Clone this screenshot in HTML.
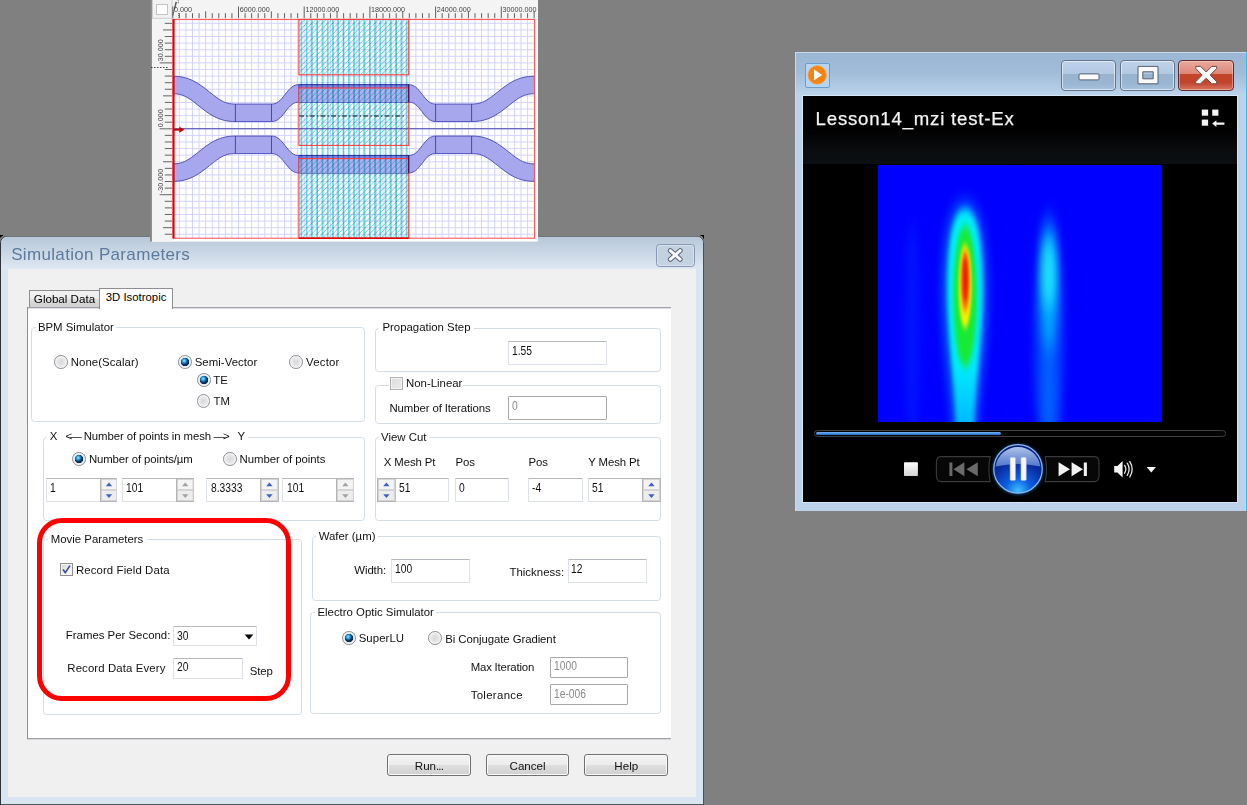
<!DOCTYPE html>
<html><head><meta charset="utf-8"><title>Simulation Parameters</title>
<style>
html,body{margin:0;padding:0}
body{width:1247px;height:805px;overflow:hidden;background:#808080;font-family:"Liberation Sans",sans-serif;position:relative}
svg text{font-family:"Liberation Sans",sans-serif}

.dlg{position:absolute;left:0;top:235.6px;width:703.6px;height:569.4px;background:#dae5f3;border-radius:7px 7px 0 0;box-shadow:inset 1px 0 0 #30343a, inset -1px 0 0 #4a4e55, inset 0 1px 0 #6e7680, inset 0 -1px 0 #50545a}
.dlgtitle{position:absolute;left:1px;top:236.6px;width:701.6px;height:32.2px;border-radius:6px 6px 0 0;background:linear-gradient(#b9c8d8 0,#c3d1e0 30%,#d3deeb 70%,#dfe8f4 100%)}
.dcorner{position:absolute;left:0;top:235.4px;width:3px;height:4px;background:radial-gradient(circle at 100% 100%,rgba(0,0,0,0) 2.6px,#000 3.2px)}
.dlgclient{position:absolute;left:8px;top:268.8px;width:687.8px;height:528.4px;background:#f0f0f0}
.ttl{position:absolute;font-size:17px;letter-spacing:0.33px;line-height:16px;color:#5c7a9c;white-space:pre}
.dclose{position:absolute;left:656.3px;top:244.1px;width:38.4px;height:22.7px;border:1.4px solid #8797b4;border-radius:3.5px;box-sizing:border-box;background:linear-gradient(#c4d1e0,#c3d0e0 50%,#c6d3e3);box-shadow:inset 0 0 0 1px rgba(225,234,244,0.7);overflow:hidden}
.dclose svg{position:absolute;left:-1.2px;top:-1.2px}
.dcorner2{position:absolute;left:699.6px;top:235.3px;width:4px;height:4.2px;background:radial-gradient(circle at 0 100%,rgba(0,0,0,0) 3.2px,#000 3.8px)}
.pane{position:absolute;background:#fff;border:1px solid #8c8e94;border-top:1px solid #a0a2a8;border-right:none;border-bottom:1px solid #a0a2a8;box-sizing:border-box;box-shadow:0 1px 0 #d6d7da,inset 0 1px 0 rgba(160,162,168,0.35)}
.tab{position:absolute;box-sizing:border-box;border:1px solid #8c8e94;border-bottom:none;background:linear-gradient(#f2f2f2,#ebebeb 50%,#dddddd 52%,#cfcfcf);font-size:11.6px;text-align:center;white-space:pre}
.tab span{position:relative;top:1.6px}
.tab.sel{background:#fff;z-index:2}
.tab.sel span{top:1.3px;font-size:11.35px}
.grp{position:absolute;box-sizing:border-box;border:1px solid #d3dde6;border-radius:3.5px}
.gl{position:absolute;height:16px;line-height:16px;background:#fff;font-size:11.4px;text-align:center;white-space:pre;color:#111}
.t{position:absolute;height:16px;line-height:16px;font-size:11.4px;white-space:pre;color:#111}
.t.g{color:#8a8a8a}
.ft{font-size:13px;transform:scaleX(0.79);transform-origin:0 50%}
.rad{position:absolute;width:13.8px;height:13.8px;border-radius:50%;box-sizing:border-box;border:1px solid #8c9099;background:radial-gradient(circle at 50% 50%,#d8d8d8 0,#e6e6e6 45%,#f6f6f6 75%,#fdfdfd 100%);box-shadow:inset 0 0 0 1px #f4f4f4}
.rad.on{background:radial-gradient(circle at 50% 50%,rgba(0,0,0,0) 0,rgba(0,0,0,0) 3.9px,#dfe8ef 4.5px,#f6f8fa 5.8px),radial-gradient(circle at 43% 40%,#a8e8ff 0,#38aee2 1.5px,#1668a6 2.8px,#0a2a52 4.1px,#0a2a52 5px)}
.chk{position:absolute;width:13px;height:13px;box-sizing:border-box;border:1px solid #8e8f8f;background:linear-gradient(135deg,#d0d0d0,#f4f4f4 60%,#fafafa);box-shadow:inset 0 0 0 1px #f4f4f4}
.chk.dis{border-color:#b1b1b1;background:linear-gradient(135deg,#dcdcdc,#ececec)}
.chk svg{position:absolute;left:-1px;top:-1px}
.fld{position:absolute;box-sizing:border-box;background:#fff;border:1px solid #dde1e8;border-top-color:#b4b8c0;border-radius:1px}
.fld.dis{border-color:#a9a9a9;background:#fff}
.abs{position:absolute}
.btn{position:absolute;box-sizing:border-box;border:1px solid #707070;border-radius:3px;background:linear-gradient(#f3f3f3,#ececec 48%,#dedede 52%,#d0d0d0);box-shadow:inset 0 0 0 1px #fafafa;font-size:11.6px;text-align:center;color:#111}
.btn i{font-style:normal;letter-spacing:-0.9px}
.btn span{position:relative;top:3.4px}
.redbox{position:absolute;left:36.7px;top:518.2px;width:254.4px;height:182.6px;box-sizing:border-box;border:5.6px solid #ff0000;border-radius:25px}

.wm{position:absolute;left:794.8px;top:51.6px;width:460px;height:459.4px;background:#bbd2ea;box-shadow:inset 1px 1px 0 #c7dbef}
.wmtb{position:absolute;left:795.8px;top:52.6px;width:455px;height:43.4px;background:linear-gradient(#9bb7d4 0,#a1bcd8 45%,#b0c9e3 75%,#bcd4ec 100%)}
.wmedge{position:absolute;left:1245.6px;top:52px;width:1.4px;height:458.6px;background:#35c2ea}
.wmicon{position:absolute;left:805.2px;top:63.4px;width:24.6px;height:24.8px;box-sizing:border-box;border:1px solid #6a9dd0;border-radius:2px;background:#b4d6f2;overflow:hidden}
.wmicon svg{position:absolute;left:-1px;top:-1px}
.cb{position:absolute;top:59.8px;height:31.6px;box-sizing:border-box;border:1px solid #62738c;border-radius:4px;background:linear-gradient(#bfd3e9 0,#b2c9e2 44%,#98b3d0 46%,#9ab6d3 80%,#a9c3de 100%);box-shadow:inset 0 0 0 1px rgba(255,255,255,0.55);overflow:hidden}
.cb.red{border-color:#5c2a33;background:linear-gradient(#e9aa9d 0,#dc8877 44%,#c2442a 46%,#c1452c 75%,#d87560 100%);box-shadow:inset 0 0 0 1px rgba(255,220,210,0.45)}
.wmc{position:absolute;left:802.6px;top:96px;width:434.4px;height:406px;background:#000;box-shadow:0 0 0 1px rgba(222,235,248,0.8)}
.wmhdr{position:absolute;left:802.6px;top:128px;width:434.4px;height:36px;background:linear-gradient(#000,#0a0c0e 60%,#0c0f12)}
.wmt{position:absolute;left:815.6px;top:108.4px;font-size:18.6px;letter-spacing:0.8px;line-height:22px;color:#f4f4f4;white-space:pre;-webkit-text-stroke:0.25px #f0f0f0}
.seek{position:absolute;left:814.4px;top:430.4px;width:412px;height:6.6px;box-sizing:border-box;border:1px solid #3c3f42;border-radius:3.3px;background:#050505}
.seekp{position:absolute;left:0.6px;top:0.7px;width:184.6px;height:3.2px;border-radius:1.6px;background:linear-gradient(#7fb6f0,#3a86dc 60%,#2a6cc0)}

</style></head><body>
<div class="wm"></div><div class="wmtb"></div><div class="wmedge"></div>
<div class="wmicon"><svg width="25" height="25" viewBox="0 0 25 25"><circle cx="12.2" cy="11.9" r="9.2" fill="#f58410"/><circle cx="12.2" cy="11.9" r="9.2" fill="none" stroke="#f9a040" stroke-width="0.8"/><path d="M9 6.6L17.2 11.9L9 17.2Z" fill="#fff"/></svg></div>
<div class="cb" style="left:1060.6px;width:55.6px"><div class="gl1"></div><svg width="56" height="32" viewBox="0 0 56 32" style="position:absolute;left:-1px;top:-1px"><rect x="18" y="13.9" width="20" height="6" rx="1" fill="#fbfbfb" stroke="#566070" stroke-width="1"/></svg></div>
<div class="cb" style="left:1119.5px;width:55.8px"><div class="gl1"></div><svg width="56" height="32" viewBox="0 0 56 32" style="position:absolute;left:-1px;top:-1px"><path d="M18 6.4H38V23.8H18ZM22.8 11.8V18.8H33.2V11.8Z" fill="#fbfbfb" fill-rule="evenodd" stroke="#566070" stroke-width="1" stroke-linejoin="round"/></svg></div>
<div class="cb red" style="left:1178.2px;width:56px"><div class="gl1"></div><svg width="56" height="32" viewBox="0 0 56 32" style="position:absolute;left:-1px;top:-1px"><path d="M17.8 6.4H22.6L28.2 12L33.8 6.4H38.6V8.6L32.2 15.1L38.6 21.6V23.8H33.8L28.2 18.2L22.6 23.8H17.8V21.6L24.2 15.1L17.8 8.6Z" fill="#fbfbfb" stroke="#6c4a4a" stroke-width="1" stroke-linejoin="round"/></svg></div>
<div class="wmc"></div><div class="wmhdr"></div>
<div class="wmt">Lesson14_mzi test-Ex</div>
<svg style="position:absolute;left:1200px;top:108px" width="26" height="22" viewBox="1200 108 26 22"><rect x="1201.8" y="109.6" width="6.3" height="6.1" fill="#f4f4f4"/><rect x="1212.2" y="109.6" width="6.2" height="6.1" fill="#f4f4f4"/><rect x="1201.8" y="119.6" width="6.3" height="6.1" fill="#f4f4f4"/><path d="M1212.2 123.6L1216.4 120.2V122.6H1224.4V124.7H1216.4V127Z" fill="#f4f4f4"/></svg>
<svg style="position:absolute;left:877.6px;top:164.8px" width="284.2" height="257.6" viewBox="877.6 164.8 284.2 257.6">
<defs>
<filter id="b1" x="-50%" y="-20%" width="200%" height="140%"><feGaussianBlur stdDeviation="2.2 5"/></filter>
<filter id="b2" x="-50%" y="-20%" width="200%" height="140%"><feGaussianBlur stdDeviation="4 9"/></filter>
<filter id="b3" x="-50%" y="-20%" width="200%" height="140%"><feGaussianBlur stdDeviation="1.4 3.5"/></filter>
<linearGradient id="cyg" gradientUnits="userSpaceOnUse" x1="0" y1="200" x2="0" y2="430"><stop offset="0" stop-color="#00f0ff"/><stop offset="0.72" stop-color="#00ecff"/><stop offset="1" stop-color="#00b4ff"/></linearGradient><clipPath id="vc"><rect x="877.6" y="164.8" width="284.2" height="257.6"/></clipPath>
</defs>
<rect x="877.6" y="164.8" width="284.2" height="257.6" fill="#0000fe"/>
<g clip-path="url(#vc)">
<path d="M964.6 201C981 201 987.5 240 987.5 295C987.5 350 978 395 977 440H952C951 395 941.5 350 941.5 295C941.5 240 948 201 964.6 201Z" fill="#0060ff" filter="url(#b2)" opacity="0.9"/>
<path d="M964.6 209C978 209 982.4 248 982.4 292C982.4 340 974 385 973 440H956.2C955.2 385 946.8 340 946.8 292C946.8 248 951 209 964.6 209Z" fill="url(#cyg)" filter="url(#b1)"/>
<ellipse cx="964.6" cy="296" rx="11.8" ry="71" fill="#14ea34" filter="url(#b1)"/>
<ellipse cx="964.7" cy="286" rx="6.3" ry="42" fill="#fff000" filter="url(#b3)"/>
<ellipse cx="964.8" cy="281" rx="4.1" ry="31" fill="#ff7800" filter="url(#b3)"/>
<ellipse cx="964.9" cy="279" rx="2.7" ry="23" fill="#f01600" filter="url(#b3)"/>
<ellipse cx="1048.4" cy="340" rx="15" ry="130" fill="#0048ff" filter="url(#b2)" opacity="0.8"/>
<ellipse cx="1048.4" cy="290" rx="8.5" ry="64" fill="#00a8ff" filter="url(#b2)"/>
<ellipse cx="1048.4" cy="274" rx="6" ry="34" fill="#20e4ff" filter="url(#b2)"/>
<ellipse cx="1048.4" cy="390" rx="6.5" ry="55" fill="#0080ff" filter="url(#b2)" opacity="0.6"/>
<ellipse cx="912" cy="330" rx="8" ry="110" fill="#0028ff" filter="url(#b2)" opacity="0.5"/>
</g></svg>
<div class="seek"><div class="seekp"></div></div>
<svg style="position:absolute;left:895px;top:440px" width="270" height="60" viewBox="895 440 270 60">
<defs>
<radialGradient id="pg" cx="0.5" cy="0.95" r="0.75"><stop offset="0" stop-color="#3fc0ff"/><stop offset="0.35" stop-color="#0d5fe0"/><stop offset="0.75" stop-color="#0a2fa6"/><stop offset="1" stop-color="#06207a"/></radialGradient>
<linearGradient id="ph" x1="0" y1="0" x2="0" y2="1"><stop offset="0" stop-color="#b8cdf0" stop-opacity="0.95"/><stop offset="1" stop-color="#5f86d8" stop-opacity="0.85"/></linearGradient>
<linearGradient id="sg" x1="0" y1="0" x2="0" y2="1"><stop offset="0" stop-color="#ffffff"/><stop offset="1" stop-color="#d4d4d4"/></linearGradient>
<filter id="glow" x="-30%" y="-30%" width="160%" height="160%"><feGaussianBlur stdDeviation="1.6"/></filter>
</defs>
<rect x="904" y="462.2" width="13.9" height="13.8" rx="0.8" fill="url(#sg)"/>
<path d="M941 456.6H990.2Q987.6 469 990.2 481.6H941Q936.4 481.6 936.4 475V463Q936.4 456.6 941 456.6Z" fill="#070707" stroke="#3a3a3a" stroke-width="1.1"/>
<path d="M1045.2 456.6H1094.4Q1099 456.6 1099 463V475Q1099 481.6 1094.4 481.6H1045.2Q1047.8 469 1045.2 456.6Z" fill="#070707" stroke="#3a3a3a" stroke-width="1.1"/>
<path d="M949.4 462.4H952.4V476H949.4ZM964.4 462.2V476.2L953.4 469.2ZM977.8 462.2V476.2L966.4 469.2Z" fill="#6a6a6a"/>
<path d="M1058.6 462.2L1070 469.2L1058.6 476.2ZM1071.6 462.2L1083 469.2L1071.6 476.2ZM1083.8 462.4H1086.9V476H1083.8Z" fill="#f2f2f2"/>
<circle cx="1018" cy="469.4" r="25.4" fill="#1e90ff" opacity="0.55" filter="url(#glow)"/>
<circle cx="1018" cy="468.9" r="24.2" fill="url(#pg)" stroke="#8fb8ee" stroke-width="1.2"/>
<path d="M995.6 466.5A22.6 22.6 0 0 1 1040.4 466.5Q1018 461.5 995.6 466.5Z" fill="url(#ph)"/>
<rect x="1010.1" y="457.2" width="5.4" height="23.4" rx="1.4" fill="#f7f7f7" stroke="#9ab0d8" stroke-width="0.5"/>
<rect x="1020.9" y="457.2" width="5.4" height="23.4" rx="1.4" fill="#f7f7f7" stroke="#9ab0d8" stroke-width="0.5"/>
<path d="M1114.2 466H1117.4L1122.6 461V477.6L1117.4 472.6H1114.2Z" fill="#f4f4f4"/>
<path d="M1124.6 465.4Q1127.2 469.3 1124.6 473.2M1127.2 463.2Q1131.2 469.3 1127.2 475.4M1129.8 461.6Q1134.6 469.3 1129.8 477" fill="none" stroke="#e8e8e8" stroke-width="1.3" stroke-linecap="round"/>
<path d="M1146.6 467H1156L1151.3 472.4Z" fill="#f4f4f4"/>
</svg>
<div class="dlg"></div><div class="dlgtitle"></div><div class="dlgclient"></div>
<div class="dcorner"></div>
<div class="ttl" style="left:11.2px;top:246.6px;">Simulation Parameters</div>
<div class="dclose"><svg width="38.4" height="22.7" viewBox="0 0 38.4 22.7"><path d="M14.3 6.6L24.2 15.3M24.2 6.6L14.3 15.3" stroke="#5c667c" stroke-width="5" stroke-linecap="round" fill="none"/><path d="M14.3 6.6L24.2 15.3M24.2 6.6L14.3 15.3" stroke="#fbfbfb" stroke-width="2.9" stroke-linecap="round" fill="none"/></svg></div>
<div class="dcorner2"></div>
<div class="pane" style="left:27.3px;top:307.2px;width:643.6px;height:432.1px;"></div>
<div class="tab" style="left:29.4px;top:289.8px;width:70.2px;height:17.6px;"><span>Global Data</span></div>
<div class="tab sel" style="left:99.4px;top:288px;width:73.4px;height:20.6px;"><span>3D Isotropic</span></div>
<div class="grp" style="left:31.4px;top:327.4px;width:333.2px;height:94.6px;"></div>
<div class="gl" style="left:35.5px;top:319.4px;width:80.8px"><span>BPM Simulator</span></div>
<div class="rad" style="left:54.3px;top:355.3px"></div>
<div class="t" style="left:70.7px;top:354.2px;letter-spacing:0.076px;">None(Scalar)</div>
<div class="rad on" style="left:178px;top:355px"></div>
<div class="t" style="left:194.7px;top:354px;letter-spacing:0.051px;">Semi-Vector</div>
<div class="rad" style="left:289.3px;top:355.3px"></div>
<div class="t" style="left:306px;top:354.2px;letter-spacing:0.216px;">Vector</div>
<div class="rad on" style="left:196.8px;top:373.1px"></div>
<div class="t" style="left:213.2px;top:371.9px;letter-spacing:0.032px;">TE</div>
<div class="rad" style="left:196.6px;top:394.3px"></div>
<div class="t" style="left:213.6px;top:393.2px;letter-spacing:-0.061px;">TM</div>
<div class="grp" style="left:374.5px;top:328px;width:286.5px;height:43.6px;"></div>
<div class="gl" style="left:378.8px;top:319.4px;width:95.4px"><span>Propagation Step</span></div>
<div class="fld" style="left:508.2px;top:341.4px;width:98.8px;height:23.8px;"></div>
<div class="t ft" style="left:511.8px;top:342.9px;">1.55</div>
<div class="grp" style="left:374.5px;top:384.6px;width:286.5px;height:39.4px;"></div>
<div class="gl" style="left:389px;top:375.1px;width:74px"><div class="chk dis" style="position:relative;display:inline-block;vertical-align:-3px;margin-right:3.4px"></div><span>Non-Linear</span></div>
<div class="t" style="left:389.5px;top:400.4px;letter-spacing:-0.110px;">Number of Iterations</div>
<div class="fld dis" style="left:508.2px;top:396.2px;width:98.8px;height:23.5px;"></div>
<div class="t ft g" style="left:512px;top:397.5px;">0</div>
<div class="grp" style="left:43.2px;top:436.6px;width:321.4px;height:84.4px;"></div>
<div class="gl" style="left:46.7px;top:428.6px;width:201.8px"><span></span></div>
<div class="t" style="left:49.7px;top:427.7px;">X</div>
<div class="t" style="left:65.6px;top:427.7px;letter-spacing:-2.1px">&lt;&mdash;</div>
<div class="t" style="left:83.75px;top:427.7px;letter-spacing:-0.108px;">Number of points in mesh</div>
<div class="t" style="left:213.8px;top:427.7px;letter-spacing:-2.1px">&mdash;&gt;</div>
<div class="t" style="left:237.6px;top:427.7px;">Y</div>
<div class="rad on" style="left:71.9px;top:452.1px"></div>
<div class="t" style="left:88.9px;top:451px;letter-spacing:-0.113px;">Number of points/µm</div>
<div class="rad" style="left:223.2px;top:452.1px"></div>
<div class="t" style="left:239.6px;top:451px;letter-spacing:-0.067px;">Number of points</div>
<div class="fld" style="left:46.2px;top:478.3px;width:71.3px;height:24px;"></div>
<div class="t ft" style="left:50.4px;top:479.8px;">1</div>
<div class="abs" style="left:99.6px;top:478.3px;width:17.9px;height:24px"><svg width="17.9" height="24" viewBox="0 0 17.9 24"><rect x="0.5" y="0.5" width="16.9" height="23" fill="#e4e4e4" stroke="#b4b4b4"/><rect x="1.5" y="1.5" width="14.9" height="10" fill="#f4f4f4" stroke="#cfcfcf" stroke-width="0.8"/><rect x="1.5" y="12.5" width="14.9" height="10" fill="#ededed" stroke="#cfcfcf" stroke-width="0.8"/><path d="M5.75 8.2L8.95 4.4L12.15 8.2Z" fill="#4060c0"/><path d="M5.75 16.2L8.95 20L12.15 16.2Z" fill="#4060c0"/></svg></div>
<div class="fld" style="left:122.1px;top:478.3px;width:71.9px;height:24px;"></div>
<div class="t ft" style="left:126.3px;top:479.8px;">101</div>
<div class="abs" style="left:175.5px;top:478.3px;width:18.5px;height:24px"><svg width="18.5" height="24" viewBox="0 0 18.5 24"><rect x="0.5" y="0.5" width="17.5" height="23" fill="#e4e4e4" stroke="#b4b4b4"/><rect x="1.5" y="1.5" width="15.5" height="10" fill="#f4f4f4" stroke="#cfcfcf" stroke-width="0.8"/><rect x="1.5" y="12.5" width="15.5" height="10" fill="#ededed" stroke="#cfcfcf" stroke-width="0.8"/><path d="M6.05 8.2L9.25 4.4L12.45 8.2Z" fill="#a2a2a2"/><path d="M6.05 16.2L9.25 20L12.45 16.2Z" fill="#a2a2a2"/></svg></div>
<div class="fld" style="left:206.4px;top:478.3px;width:72.2px;height:24px;"></div>
<div class="t ft" style="left:210.6px;top:479.8px;">8.3333</div>
<div class="abs" style="left:259.8px;top:478.3px;width:18.8px;height:24px"><svg width="18.8" height="24" viewBox="0 0 18.8 24"><rect x="0.5" y="0.5" width="17.8" height="23" fill="#e4e4e4" stroke="#b4b4b4"/><rect x="1.5" y="1.5" width="15.8" height="10" fill="#f4f4f4" stroke="#cfcfcf" stroke-width="0.8"/><rect x="1.5" y="12.5" width="15.8" height="10" fill="#ededed" stroke="#cfcfcf" stroke-width="0.8"/><path d="M6.2 8.2L9.4 4.4L12.6 8.2Z" fill="#4060c0"/><path d="M6.2 16.2L9.4 20L12.6 16.2Z" fill="#4060c0"/></svg></div>
<div class="fld" style="left:282.3px;top:478.3px;width:72.2px;height:24px;"></div>
<div class="t ft" style="left:286.5px;top:479.8px;">101</div>
<div class="abs" style="left:335.7px;top:478.3px;width:18.8px;height:24px"><svg width="18.8" height="24" viewBox="0 0 18.8 24"><rect x="0.5" y="0.5" width="17.8" height="23" fill="#e4e4e4" stroke="#b4b4b4"/><rect x="1.5" y="1.5" width="15.8" height="10" fill="#f4f4f4" stroke="#cfcfcf" stroke-width="0.8"/><rect x="1.5" y="12.5" width="15.8" height="10" fill="#ededed" stroke="#cfcfcf" stroke-width="0.8"/><path d="M6.2 8.2L9.4 4.4L12.6 8.2Z" fill="#a2a2a2"/><path d="M6.2 16.2L9.4 20L12.6 16.2Z" fill="#a2a2a2"/></svg></div>
<div class="grp" style="left:374.5px;top:436.6px;width:286.5px;height:84.4px;"></div>
<div class="gl" style="left:378.8px;top:428.6px;width:50px"><span>View Cut</span></div>
<div class="t" style="left:383.8px;top:453.9px;letter-spacing:-0.123px;">X Mesh Pt</div>
<div class="t" style="left:455.4px;top:453.9px;letter-spacing:-0.022px;">Pos</div>
<div class="t" style="left:528.4px;top:453.9px;letter-spacing:-0.022px;">Pos</div>
<div class="t" style="left:588.2px;top:453.9px;letter-spacing:-0.098px;">Y Mesh Pt</div>
<div class="fld" style="left:376.8px;top:478.3px;width:72px;height:24px;"></div>
<div class="t ft" style="left:399px;top:479.8px;">51</div>
<div class="abs" style="left:376.8px;top:478.3px;width:18.8px;height:24px"><svg width="18.8" height="24" viewBox="0 0 18.8 24"><rect x="0.5" y="0.5" width="17.8" height="23" fill="#e4e4e4" stroke="#b4b4b4"/><rect x="1.5" y="1.5" width="15.8" height="10" fill="#f4f4f4" stroke="#cfcfcf" stroke-width="0.8"/><rect x="1.5" y="12.5" width="15.8" height="10" fill="#ededed" stroke="#cfcfcf" stroke-width="0.8"/><path d="M6.2 8.2L9.4 4.4L12.6 8.2Z" fill="#4060c0"/><path d="M6.2 16.2L9.4 20L12.6 16.2Z" fill="#4060c0"/></svg></div>
<div class="fld" style="left:455.4px;top:478.3px;width:53.2px;height:24px;"></div>
<div class="t ft" style="left:458.8px;top:479.8px;">0</div>
<div class="fld" style="left:528.4px;top:478.3px;width:54.8px;height:24px;"></div>
<div class="t ft" style="left:531.9px;top:479.8px;">-4</div>
<div class="fld" style="left:588.2px;top:478.3px;width:72.8px;height:24px;"></div>
<div class="t ft" style="left:591.6px;top:479.8px;">51</div>
<div class="abs" style="left:642.1px;top:478.3px;width:18.9px;height:24px"><svg width="18.9" height="24" viewBox="0 0 18.9 24"><rect x="0.5" y="0.5" width="17.9" height="23" fill="#e4e4e4" stroke="#b4b4b4"/><rect x="1.5" y="1.5" width="15.9" height="10" fill="#f4f4f4" stroke="#cfcfcf" stroke-width="0.8"/><rect x="1.5" y="12.5" width="15.9" height="10" fill="#ededed" stroke="#cfcfcf" stroke-width="0.8"/><path d="M6.25 8.2L9.45 4.4L12.65 8.2Z" fill="#4060c0"/><path d="M6.25 16.2L9.45 20L12.65 16.2Z" fill="#4060c0"/></svg></div>
<div class="grp" style="left:43.2px;top:539.2px;width:259.2px;height:175.6px;"></div>
<div class="gl" style="left:47.5px;top:531.2px;width:99px"><span>Movie Parameters</span></div>
<div class="chk" style="left:59.8px;top:562.8px"><svg width="13" height="13" viewBox="0 0 13 13"><path d="M3 6.4L5.3 9.6L10 2.6" fill="none" stroke="#3b4f9c" stroke-width="1.7"/></svg></div>
<div class="t" style="left:75.9px;top:561.5px;letter-spacing:0.114px;">Record Field Data</div>
<div class="t" style="left:65.8px;top:626.7px;letter-spacing:0.003px;">Frames Per Second:</div>
<div class="fld cmb" style="left:173.2px;top:625.8px;width:83.8px;height:20.6px;"><svg width="10" height="6" viewBox="0 0 10 6" style="position:absolute;right:2.4px;top:6.8px"><path d="M0.6 0.6H9.4L5 5.4Z" fill="#000"/></svg></div>
<div class="t ft" style="left:176.7px;top:627.6px;">30</div>
<div class="t" style="left:67.3px;top:659.9px;letter-spacing:0.118px;">Record Data Every</div>
<div class="fld" style="left:173.2px;top:657.5px;width:69.4px;height:21.1px;"></div>
<div class="t ft" style="left:176.7px;top:659px;">20</div>
<div class="t" style="left:249.7px;top:662.8px;letter-spacing:-0.084px;">Step</div>
<div class="grp" style="left:311.8px;top:536.4px;width:349.2px;height:64.6px;"></div>
<div class="gl" style="left:316.4px;top:528.4px;width:61.4px"><span>Wafer (µm)</span></div>
<div class="t" style="left:354.3px;top:562.1px;letter-spacing:-0.101px;">Width:</div>
<div class="fld" style="left:391.3px;top:559.4px;width:79.1px;height:23.7px;"></div>
<div class="t ft" style="left:394.7px;top:561.2px;">100</div>
<div class="t" style="left:509.4px;top:563.6px;letter-spacing:0.035px;">Thickness:</div>
<div class="fld" style="left:568px;top:559.4px;width:78.6px;height:23.7px;"></div>
<div class="t ft" style="left:571.4px;top:561.2px;">12</div>
<div class="grp" style="left:310.4px;top:612.2px;width:350.6px;height:102px;"></div>
<div class="gl" style="left:315.2px;top:604.2px;width:121px"><span>Electro Optic Simulator</span></div>
<div class="rad on" style="left:342.4px;top:631.3px"></div>
<div class="t" style="left:358.7px;top:630.2px;letter-spacing:0.067px;">SuperLU</div>
<div class="rad" style="left:428.3px;top:631.3px"></div>
<div class="t" style="left:445.3px;top:631px;letter-spacing:-0.079px;">Bi Conjugate Gradient</div>
<div class="t" style="left:470.7px;top:659px;letter-spacing:-0.191px;">Max Iteration</div>
<div class="fld dis" style="left:549.8px;top:657px;width:78.2px;height:20.7px;"></div>
<div class="t ft g" style="left:553.5px;top:658.4px;">1000</div>
<div class="t" style="left:470.7px;top:686.5px;letter-spacing:0.321px;">Tolerance</div>
<div class="fld dis" style="left:549.8px;top:684.4px;width:78.2px;height:20.8px;"></div>
<div class="t ft g" style="left:553.5px;top:685.6px;">1e-006</div>
<div class="btn" style="left:387px;top:754.3px;width:83.8px;height:21.7px;"><span>Run<i>...</i></span></div>
<div class="btn" style="left:485.7px;top:754.3px;width:83.8px;height:21.7px;"><span>Cancel</span></div>
<div class="btn" style="left:584.4px;top:754.3px;width:83.8px;height:21.7px;"><span>Help</span></div>
<div class="redbox"></div>
<svg class="lay" width="390" height="242" viewBox="150 0 390 242" style="position:absolute;left:150px;top:0">
<defs>
<pattern id="hv" x="298.77" y="0" width="5.26" height="8" patternUnits="userSpaceOnUse"><rect x="2.1" y="0" width="1.1" height="8" fill="#28caca"/></pattern>
<pattern id="hd" x="298.77" y="20.6" width="5.26" height="5.26" patternUnits="userSpaceOnUse"><path d="M-1 6.26L6.26 -1M-1 1L1 -1M4.26 6.26L6.26 4.26" stroke="#52d4d4" stroke-width="0.85" fill="none"/></pattern>
<clipPath id="cp"><rect x="172.8" y="19.4" width="361.8" height="218.8"/></clipPath>
</defs>
<rect x="150" y="0" width="388" height="241.6" fill="#ffffff"/>
<rect x="150" y="0" width="1.9" height="241.6" fill="#858585"/>
<rect x="152" y="0" width="385.8" height="19" fill="#f4f4f4"/>
<rect x="152" y="19" width="20.8" height="222.6" fill="#f4f4f4"/>
<rect x="152.5" y="-1" width="19.5" height="19.3" fill="#f2f2f2" stroke="#cfcfcf" stroke-width="1"/>
<rect x="156.5" y="4.5" width="11" height="10" fill="#ffffff" stroke="#c4c4c4" stroke-width="1"/>
<path d="M179.37 19.4V238.2M185.94 19.4V238.2M192.51 19.4V238.2M199.08 19.4V238.2M205.65 19.4V238.2M212.22 19.4V238.2M218.79 19.4V238.2M225.36 19.4V238.2M231.93 19.4V238.2M238.5 19.4V238.2M245.07 19.4V238.2M251.64 19.4V238.2M258.21 19.4V238.2M264.78 19.4V238.2M271.35 19.4V238.2M277.92 19.4V238.2M284.49 19.4V238.2M291.06 19.4V238.2M297.63 19.4V238.2M304.2 19.4V238.2M310.77 19.4V238.2M317.34 19.4V238.2M323.91 19.4V238.2M330.48 19.4V238.2M337.05 19.4V238.2M343.62 19.4V238.2M350.19 19.4V238.2M356.76 19.4V238.2M363.33 19.4V238.2M369.9 19.4V238.2M376.47 19.4V238.2M383.04 19.4V238.2M389.61 19.4V238.2M396.18 19.4V238.2M402.75 19.4V238.2M409.32 19.4V238.2M415.89 19.4V238.2M422.46 19.4V238.2M429.03 19.4V238.2M435.6 19.4V238.2M442.17 19.4V238.2M448.74 19.4V238.2M455.31 19.4V238.2M461.88 19.4V238.2M468.45 19.4V238.2M475.02 19.4V238.2M481.59 19.4V238.2M488.16 19.4V238.2M494.73 19.4V238.2M501.3 19.4V238.2M507.87 19.4V238.2M514.44 19.4V238.2M521.01 19.4V238.2M527.58 19.4V238.2M172.8 23.34H534.6M172.8 29.94H534.6M172.8 36.53H534.6M172.8 43.12H534.6M172.8 49.71H534.6M172.8 56.3H534.6M172.8 62.89H534.6M172.8 69.48H534.6M172.8 76.07H534.6M172.8 82.66H534.6M172.8 89.25H534.6M172.8 95.85H534.6M172.8 102.44H534.6M172.8 109.03H534.6M172.8 115.62H534.6M172.8 122.21H534.6M172.8 128.8H534.6M172.8 135.39H534.6M172.8 141.98H534.6M172.8 148.57H534.6M172.8 155.16H534.6M172.8 161.75H534.6M172.8 168.35H534.6M172.8 174.94H534.6M172.8 181.53H534.6M172.8 188.12H534.6M172.8 194.71H534.6M172.8 201.3H534.6M172.8 207.89H534.6M172.8 214.48H534.6M172.8 221.07H534.6M172.8 227.67H534.6M172.8 234.26H534.6" stroke="#d3d3ff" stroke-width="1" fill="none"/>
<path d="M173 76.25L175.86 76.32L179.03 76.58L182.29 77.08L185.59 77.85L188.89 78.93L192.14 80.29L195.3 81.91L198.36 83.73L201.31 85.72L204.16 87.81L206.91 89.94L209.56 92.06L212.12 94.11L214.59 96.03L216.96 97.77L219.23 99.3L221.39 100.59L223.44 101.65L225.41 102.47L227.33 103.1L229.24 103.54L231.19 103.84L233.24 104L235.41 104.05L271.5 104.05L271.5 104.05L273.21 103.95L274.93 103.58L276.64 102.88L278.35 101.8L280.06 100.34L281.77 98.55L283.49 96.52L285.2 94.35L286.91 92.18L288.62 90.15L290.34 88.36L292.05 86.9L293.76 85.82L295.47 85.12L297.19 84.75L298.9 84.65L408.7 84.65L408.7 84.65L410.38 84.75L412.06 85.12L413.74 85.82L415.43 86.9L417.11 88.36L418.79 90.15L420.47 92.18L422.15 94.35L423.83 96.52L425.51 98.55L427.19 100.34L428.88 101.8L430.56 102.88L432.24 103.58L433.92 103.95L435.6 104.05L471.6 104.05L471.4 104.05L473.77 104L475.85 103.84L477.82 103.54L479.75 103.09L481.69 102.47L483.68 101.64L485.75 100.58L487.93 99.29L490.21 97.76L492.6 96.01L495.08 94.09L497.66 92.05L500.33 89.93L503.1 87.79L505.96 85.71L508.93 83.72L512 81.89L515.18 80.28L518.44 78.92L521.75 77.85L525.07 77.07L528.35 76.58L531.52 76.32L534.4 76.25L534.8 93.75L532.43 93.8L530.35 93.96L528.38 94.26L526.45 94.71L524.51 95.33L522.52 96.16L520.45 97.22L518.27 98.51L515.99 100.04L513.6 101.79L511.12 103.71L508.54 105.75L505.87 107.87L503.1 110.01L500.24 112.09L497.27 114.08L494.2 115.91L491.02 117.52L487.76 118.88L484.45 119.95L481.13 120.73L477.85 121.22L474.68 121.48L471.8 121.55L471.6 121.55L435.6 121.55L433.92 121.45L432.24 121.08L430.56 120.38L428.88 119.3L427.19 117.84L425.51 116.05L423.83 114.02L422.15 111.85L420.47 109.68L418.79 107.65L417.11 105.86L415.43 104.4L413.74 103.32L412.06 102.62L410.38 102.25L408.7 102.15L408.7 102.15L298.9 102.15L297.19 102.25L295.47 102.62L293.76 103.32L292.05 104.4L290.34 105.86L288.62 107.65L286.91 109.68L285.2 111.85L283.49 114.02L281.77 116.05L280.06 117.84L278.35 119.3L276.64 120.38L274.93 121.08L273.21 121.45L271.5 121.55L271.5 121.55L235.39 121.55L232.34 121.48L229.17 121.22L225.91 120.72L222.61 119.95L219.31 118.87L216.06 117.51L212.9 115.89L209.84 114.07L206.89 112.08L204.04 109.99L201.29 107.86L198.64 105.74L196.08 103.69L193.61 101.77L191.24 100.03L188.97 98.5L186.81 97.21L184.76 96.15L182.79 95.33L180.87 94.7L178.96 94.26L177.01 93.96L174.96 93.8L172.6 93.75Z" fill="#a7a7ee" stroke="#4646b6" stroke-width="0.9" stroke-linejoin="round" clip-path="url(#cp)"/>
<rect x="298.9" y="84.65" width="109.8" height="17.5" fill="#7f7fe2" stroke="#3434a6" stroke-width="0.9"/>
<path d="M235.4 104.05V121.55" stroke="#3c3cb0" stroke-width="0.9"/>
<path d="M271.5 104.05V121.55" stroke="#3c3cb0" stroke-width="0.9"/>
<path d="M435.6 104.05V121.55" stroke="#3c3cb0" stroke-width="0.9"/>
<path d="M471.6 104.05V121.55" stroke="#3c3cb0" stroke-width="0.9"/>
<path d="M172.6 163.85L174.96 163.8L177.01 163.64L178.96 163.34L180.87 162.9L182.79 162.27L184.76 161.45L186.81 160.39L188.97 159.1L191.24 157.57L193.61 155.83L196.08 153.91L198.64 151.86L201.29 149.74L204.04 147.61L206.89 145.52L209.84 143.53L212.9 141.71L216.06 140.09L219.31 138.73L222.61 137.65L225.91 136.88L229.17 136.38L232.34 136.12L235.39 136.05L271.5 136.05L271.5 136.05L273.21 136.15L274.93 136.52L276.64 137.22L278.35 138.3L280.06 139.76L281.77 141.55L283.49 143.58L285.2 145.75L286.91 147.92L288.62 149.95L290.34 151.74L292.05 153.2L293.76 154.28L295.47 154.98L297.19 155.35L298.9 155.45L408.7 155.45L408.7 155.45L410.38 155.35L412.06 154.98L413.74 154.28L415.43 153.2L417.11 151.74L418.79 149.95L420.47 147.92L422.15 145.75L423.83 143.58L425.51 141.55L427.19 139.76L428.88 138.3L430.56 137.22L432.24 136.52L433.92 136.15L435.6 136.05L471.6 136.05L471.8 136.05L474.68 136.12L477.85 136.38L481.13 136.87L484.45 137.65L487.76 138.72L491.02 140.08L494.2 141.69L497.27 143.52L500.24 145.51L503.1 147.59L505.87 149.73L508.54 151.85L511.12 153.89L513.6 155.81L515.99 157.56L518.27 159.09L520.45 160.38L522.52 161.44L524.51 162.27L526.45 162.89L528.38 163.34L530.35 163.64L532.43 163.8L534.8 163.85L534.4 181.35L531.52 181.28L528.35 181.02L525.07 180.53L521.75 179.75L518.44 178.68L515.18 177.32L512 175.71L508.93 173.88L505.96 171.89L503.1 169.81L500.33 167.67L497.66 165.55L495.08 163.51L492.6 161.59L490.21 159.84L487.93 158.31L485.75 157.02L483.68 155.96L481.69 155.13L479.75 154.51L477.82 154.06L475.85 153.76L473.77 153.6L471.4 153.55L471.6 153.55L435.6 153.55L433.92 153.65L432.24 154.02L430.56 154.72L428.88 155.8L427.19 157.26L425.51 159.05L423.83 161.08L422.15 163.25L420.47 165.42L418.79 167.45L417.11 169.24L415.43 170.7L413.74 171.78L412.06 172.48L410.38 172.85L408.7 172.95L408.7 172.95L298.9 172.95L297.19 172.85L295.47 172.48L293.76 171.78L292.05 170.7L290.34 169.24L288.62 167.45L286.91 165.42L285.2 163.25L283.49 161.08L281.77 159.05L280.06 157.26L278.35 155.8L276.64 154.72L274.93 154.02L273.21 153.65L271.5 153.55L271.5 153.55L235.41 153.55L233.24 153.6L231.19 153.76L229.24 154.06L227.33 154.5L225.41 155.13L223.44 155.95L221.39 157.01L219.23 158.3L216.96 159.83L214.59 161.57L212.12 163.49L209.56 165.54L206.91 167.66L204.16 169.79L201.31 171.88L198.36 173.87L195.3 175.69L192.14 177.31L188.89 178.67L185.59 179.75L182.29 180.52L179.03 181.02L175.86 181.28L173 181.35Z" fill="#a7a7ee" stroke="#4646b6" stroke-width="0.9" stroke-linejoin="round" clip-path="url(#cp)"/>
<rect x="298.9" y="155.45" width="109.8" height="17.5" fill="#7f7fe2" stroke="#3434a6" stroke-width="0.9"/>
<path d="M235.4 136.05V153.55" stroke="#3c3cb0" stroke-width="0.9"/>
<path d="M271.5 136.05V153.55" stroke="#3c3cb0" stroke-width="0.9"/>
<path d="M435.6 136.05V153.55" stroke="#3c3cb0" stroke-width="0.9"/>
<path d="M471.6 136.05V153.55" stroke="#3c3cb0" stroke-width="0.9"/>
<rect x="298.9" y="88" width="109.8" height="14.15" fill="#ada8ee"/>
<rect x="298.9" y="158.6" width="109.8" height="14.35" fill="#ada8ee"/>
<rect x="298.9" y="19.4" width="109.8" height="55.4" fill="#f2e8ff" fill-opacity="0.14"/>
<rect x="298.9" y="19.4" width="109.8" height="55.4" fill="url(#hd)" style="mix-blend-mode:multiply"/>
<rect x="298.9" y="88" width="109.8" height="57.4" fill="#f2e8ff" fill-opacity="0.14"/>
<rect x="298.9" y="88" width="109.8" height="57.4" fill="url(#hd)" style="mix-blend-mode:multiply"/>
<rect x="298.9" y="158.6" width="109.8" height="79.6" fill="#f2e8ff" fill-opacity="0.14"/>
<rect x="298.9" y="158.6" width="109.8" height="79.6" fill="url(#hd)" style="mix-blend-mode:multiply"/>
<rect x="298.9" y="19.4" width="109.8" height="218.8" fill="url(#hv)" style="mix-blend-mode:multiply"/>
<path d="M172.8 128.8H534.6" stroke="#4444a8" stroke-width="1.1"/>
<path d="M299 116H406" stroke="#101010" stroke-width="1" stroke-dasharray="5 2.2 1.3 2.2"/>
<rect x="172.8" y="19.4" width="361.8" height="218.8" fill="none" stroke="#ff4a4a" stroke-width="1"/>
<rect x="298.9" y="19.4" width="109.8" height="55.4" fill="none" stroke="#ff3c3c" stroke-width="1.1"/>
<rect x="298.9" y="88" width="109.8" height="57.4" fill="none" stroke="#ff3c3c" stroke-width="1.1"/>
<rect x="298.9" y="158.6" width="109.8" height="79.6" fill="none" stroke="#ff3c3c" stroke-width="1.1"/>
<path d="M298.9 238.2H408.7" stroke="#e00000" stroke-width="1.6"/>
<path d="M408.7 84.5V102.5M408.7 155.2V173.2" stroke="#50104a" stroke-width="1.2"/>
<rect x="172.7" y="19" width="1.9" height="219.4" fill="#e60000"/>
<path d="M174 129.1H179.5V127L184.2 129.7L179.5 132.4V130.4H174Z" fill="#c80000" stroke="#c80000" stroke-width="0.4"/>
<path d="M172.8 6.5V18.2M179.37 13.2V18.2M185.94 13.2V18.2M192.51 13.2V18.2M199.08 13.2V18.2M205.65 11.3V18.2M212.22 13.2V18.2M218.79 13.2V18.2M225.36 13.2V18.2M231.93 13.2V18.2M238.5 6.5V18.2M245.07 13.2V18.2M251.64 13.2V18.2M258.21 13.2V18.2M264.78 13.2V18.2M271.35 11.3V18.2M277.92 13.2V18.2M284.49 13.2V18.2M291.06 13.2V18.2M297.63 13.2V18.2M304.2 6.5V18.2M310.77 13.2V18.2M317.34 13.2V18.2M323.91 13.2V18.2M330.48 13.2V18.2M337.05 11.3V18.2M343.62 13.2V18.2M350.19 13.2V18.2M356.76 13.2V18.2M363.33 13.2V18.2M369.9 6.5V18.2M376.47 13.2V18.2M383.04 13.2V18.2M389.61 13.2V18.2M396.18 13.2V18.2M402.75 11.3V18.2M409.32 13.2V18.2M415.89 13.2V18.2M422.46 13.2V18.2M429.03 13.2V18.2M435.6 6.5V18.2M442.17 13.2V18.2M448.74 13.2V18.2M455.31 13.2V18.2M461.88 13.2V18.2M468.45 11.3V18.2M475.02 13.2V18.2M481.59 13.2V18.2M488.16 13.2V18.2M494.73 13.2V18.2M501.3 6.5V18.2M507.87 13.2V18.2M514.44 13.2V18.2M521.01 13.2V18.2M527.58 13.2V18.2M534.15 11.3V18.2" stroke="#3a3a3a" stroke-width="0.8"/>
<text x="174.1" y="12.2" font-size="7.2" fill="#444">0.000</text>
<text x="239.7" y="12.2" font-size="7.2" fill="#444">6000.000</text>
<text x="305.4" y="12.2" font-size="7.2" fill="#444">12000.000</text>
<text x="371.1" y="12.2" font-size="7.2" fill="#444">18000.000</text>
<text x="436.8" y="12.2" font-size="7.2" fill="#444">24000.000</text>
<text x="502.5" y="12.2" font-size="7.2" fill="#444">30000.000</text>
<path d="M178.3 0.3V3.6M178.7 13V17.6" stroke="#222" stroke-width="0.7" stroke-dasharray="1 0.9"/>
<path d="M172.9 15.5L175.9 1.8M174.6 9L176.6 2" stroke="#3a3a3a" stroke-width="0.75" fill="none"/>
<path d="M151 67.5H169" stroke="#222" stroke-width="0.8" stroke-dasharray="1.6 1.4"/>
<path d="M164.8 23.34H172M163.0 29.94H172M164.8 36.53H172M164.8 43.12H172M164.8 49.71H172M164.8 56.3H172M159.6 62.89H172M164.8 69.48H172M164.8 76.07H172M164.8 82.66H172M164.8 89.25H172M163.0 95.85H172M164.8 102.44H172M164.8 109.03H172M164.8 115.62H172M164.8 122.21H172M159.6 128.8H172M164.8 135.39H172M164.8 141.98H172M164.8 148.57H172M164.8 155.16H172M163.0 161.75H172M164.8 168.35H172M164.8 174.94H172M164.8 181.53H172M164.8 188.12H172M159.6 194.71H172M164.8 201.3H172M164.8 207.89H172M164.8 214.48H172M164.8 221.07H172M163.0 227.67H172M164.8 234.26H172" stroke="#4a4a4a" stroke-width="0.85"/>
<text transform="translate(163.2 61.29) rotate(-90)" font-size="7.2" fill="#444">30.000</text>
<text transform="translate(163.2 127.2) rotate(-90)" font-size="7.2" fill="#444">0.000</text>
<text transform="translate(163.2 193.11) rotate(-90)" font-size="7.2" fill="#444">-30.000</text>
</svg>
</body></html>
